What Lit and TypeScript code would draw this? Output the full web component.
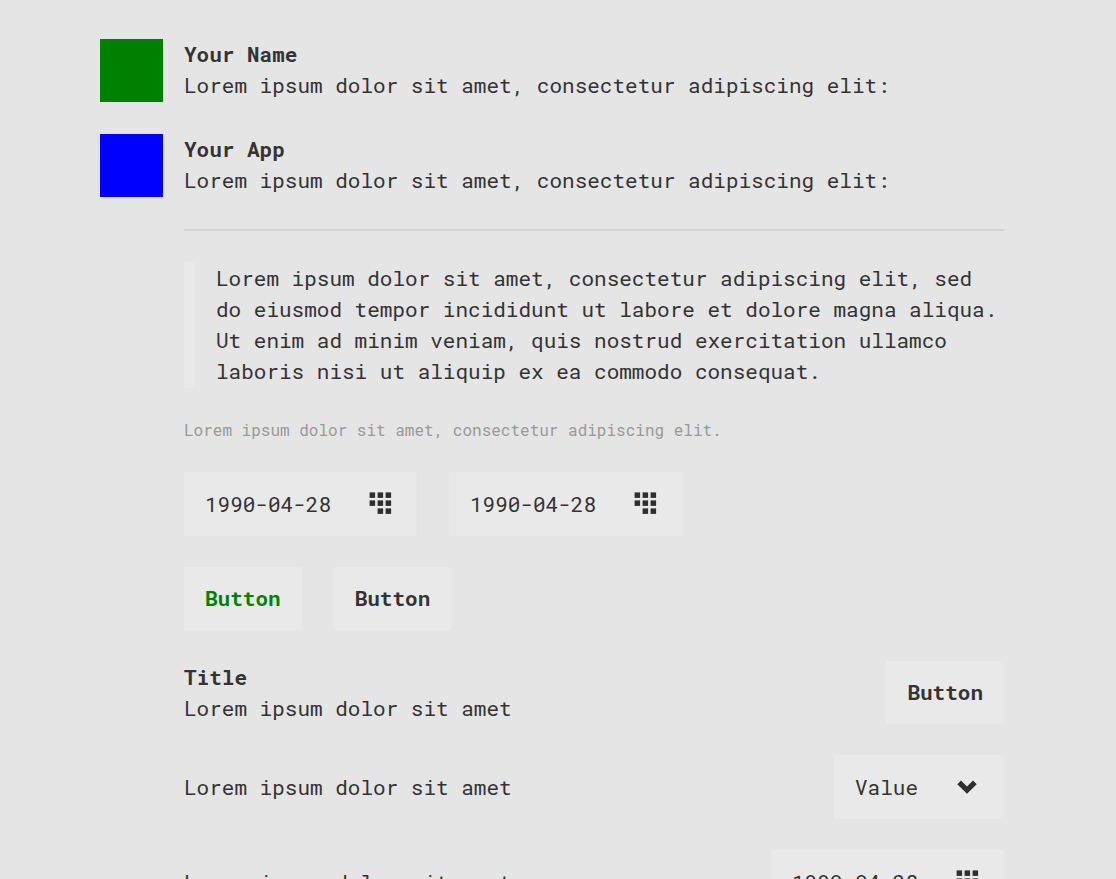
import { LitElement, html, css, svg } from "lit";
import { customElement, property } from "lit/decorators.js";

const LOREM = "Lorem ipsum dolor sit amet";
const LOREM_LONG = LOREM + ", consectetur adipiscing elit";

const shared = css`
  * {
    box-sizing: border-box;
  }
  button,
  input,
  select {
    font: inherit;
    color: inherit;
    margin: 0;
    padding: 0;
    border: 0;
    border-radius: 0;
    background: none;
    appearance: none;
  }
  .icon {
    display: block;
    width: 32px;
    height: 32px;
    fill: #2e2e2e;
  }
`;

const cells = [
  [0, 0], [1, 0], [2, 0],
  [0, 1], [1, 1], [2, 1],
  [1, 2], [2, 2],
];

@customElement("date-field")
export class DateField extends LitElement {
  @property() label = "Date";
  @property() value = "";

  static styles = [
    shared,
    css`
      :host {
        display: block;
      }
      .field {
        display: flex;
        align-items: center;
        gap: 32px;
        height: 64px;
        padding: 0 21px;
        background: #e9e9e9;
      }
      .input {
        width: 127px;
        height: 31px;
        outline: none;
      }
      .picker {
        cursor: pointer;
      }
    `,
  ];

  render() {
    return html`
      <div class="field">
        <input class="input" type="text" aria-label=${this.label} .value=${this.value} />
        <button class="picker" type="button" aria-label="Open calendar">
          <svg class="icon" viewBox="0 0 32 32" aria-hidden="true">
            ${cells.map(
              ([x, y]) =>
                svg`<rect x=${5.6 + x * 8} y=${4.4 + y * 8} width="5.5" height="5.5"></rect>`
            )}
          </svg>
        </button>
      </div>
    `;
  }
}

@customElement("app-root")
export class AppRoot extends LitElement {
  static styles = [
    shared,
    css`
      :host {
        display: block;
        min-height: 100vh;
        background: #e5e5e5;
        color: #333;
        font-family: "Roboto Mono", "DejaVu Sans Mono", monospace;
        font-size: 21px;
        line-height: 31px;
      }
      .page {
        display: flex;
        flex-direction: column;
        gap: 32px;
        padding: 39px 112px 32px 100px;
      }
      .profile {
        display: flex;
        gap: 21px;
      }
      .avatar {
        flex: none;
        width: 63px;
        height: 63px;
      }
      .green {
        background: #008000;
      }
      .blue {
        background: #0000ff;
      }
      .title {
        margin: 0;
        font-size: 21px;
        font-weight: 700;
      }
      .text {
        margin: 0;
      }
      .content {
        display: flex;
        flex-direction: column;
        gap: 31px;
        margin-left: 84px;
      }
      .rule {
        width: 100%;
        height: 2px;
        margin: 0;
        border: 0;
        background: #d2d2d2;
      }
      .quote {
        margin: 0;
        padding: 1px 0 1px 21px;
        border-left: 11px solid #e8e8e8;
      }
      .note {
        margin: 0;
        font-size: 16px;
        line-height: 22px;
        color: #999;
      }
      .group {
        display: flex;
        flex-wrap: wrap;
        gap: 32px;
      }
      .row {
        display: flex;
        align-items: center;
        justify-content: space-between;
        gap: 32px;
      }
      .button {
        height: 63px;
        padding: 0 21px;
        background: #e9e9e9;
        font-weight: 700;
        cursor: pointer;
      }
      .primary {
        color: #008000;
      }
      .select {
        display: grid;
        align-items: center;
        background: #e9e9e9;
      }
      .value {
        grid-area: 1 / 1;
        height: 64px;
        padding: 0 85px 0 21px;
        cursor: pointer;
      }
      .arrow {
        grid-area: 1 / 1;
        justify-self: end;
        margin-right: 21px;
        pointer-events: none;
      }
    `,
  ];

  private profile(name: string, tone: string) {
    return html`
      <section class="profile">
        <div class="avatar ${tone}"></div>
        <div>
          <h2 class="title">${name}</h2>
          <p class="text">${LOREM_LONG}:</p>
        </div>
      </section>
    `;
  }

  render() {
    return html`
      <main class="page">
        ${this.profile("Your Name", "green")} ${this.profile("Your App", "blue")}
        <div class="content">
          <hr class="rule" />
          <blockquote class="quote">
            ${LOREM_LONG}, sed do eiusmod tempor incididunt ut labore et dolore
            magna aliqua. Ut enim ad minim veniam, quis nostrud exercitation
            ullamco laboris nisi ut aliquip ex ea commodo consequat.
          </blockquote>
          <p class="note">${LOREM_LONG}.</p>
          <div class="group">
            <date-field label="From" value="1990-04-28"></date-field>
            <date-field label="To" value="1990-04-28"></date-field>
          </div>
          <div class="group">
            <button class="button primary" type="button">Button</button>
            <button class="button" type="button">Button</button>
          </div>
          <div class="row">
            <div>
              <h2 class="title">Title</h2>
              <p class="text">${LOREM}</p>
            </div>
            <button class="button" type="button">Button</button>
          </div>
          <div class="row">
            <label for="value">${LOREM}</label>
            <div class="select">
              <select class="value" id="value">
                <option>Value</option>
              </select>
              <svg class="icon arrow" viewBox="0 0 32 32" aria-hidden="true">
                <path d="M6.3 13.2 10 9.5l6 6 6-6 3.7 3.7-9.7 9.5z"></path>
              </svg>
            </div>
          </div>
          <div class="row">
            <span>${LOREM}</span>
            <date-field label=${LOREM} value="1990-04-28"></date-field>
          </div>
        </div>
      </main>
    `;
  }
}
